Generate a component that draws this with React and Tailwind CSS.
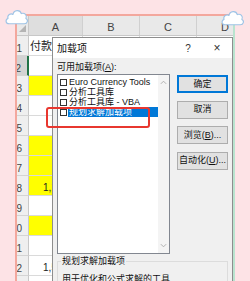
import React from 'react';

const FONT = { fontFamily: '"Liberation Sans","Noto Sans CJK SC",sans-serif' };

const COLS = [
  { key: 'A', w: 'w-[54px]' },
  { key: 'B', w: 'w-[57px]' },
  { key: 'C', w: 'w-[57px]' },
  { key: 'D', w: 'w-[57px]' },
];

// row number -> contents of column A
const ROWS = [
  { n: 1, text: '付款金额', align: 'left' },
  { n: 2, selected: true },
  { n: 3, yellow: true },
  { n: 4 },
  { n: 5 },
  { n: 6, yellow: true },
  { n: 7, yellow: true },
  { n: 8, yellow: true, text: '1,200.00', align: 'right' },
  { n: 9 },
  { n: 10, yellow: true },
  { n: 11 },
  { n: 12, text: '1,500.00', align: 'right' },
  { n: 13 },
];

const ADDINS = [
  { label: 'Euro Currency Tools' },
  { label: '分析工具库' },
  { label: '分析工具库 - VBA' },
  { label: '规划求解加载项', active: true },
];

function Cloud({ className }) {
  return (
    <svg viewBox="0 0 24 18" className={className}>
      <path
        d="M5 16 C1.5 16 1 12 3.8 11 C2.8 7.5 6.5 5.5 8.6 7 C9.4 2.5 15.5 2 16.6 6.2 C19.8 5 22.6 8 21 11 C23.6 12.3 22.6 16 19.5 16 Z"
        fill="#ffffff"
        stroke="#9fc4e6"
        strokeWidth="1.1"
        strokeLinejoin="round"
      />
    </svg>
  );
}

function Sheet() {
  return (
    <div className="flex flex-col">
      {/* column letters */}
      <div className="flex h-[20px] bg-[#e9e9e9] border-b border-[#c8c8c8]">
        <div className="w-[12px] shrink-0 relative border-r border-[#c8c8c8]">
          <div className="absolute right-[2px] bottom-[3px] w-0 h-0 border-l-[7px] border-l-transparent border-b-[7px] border-b-[#b4b4b4]" />
        </div>
        {COLS.map(c => (
          <div
            key={c.key}
            className={`${c.w} shrink-0 flex items-end justify-center pb-[2px] text-[11px] leading-none text-[#444] border-r border-[#d0d0d0] ${c.key === 'A' ? 'bg-[#dedede]' : ''}`}
          >
            {c.key}
          </div>
        ))}
      </div>

      {ROWS.map(r => (
        <div key={r.n} className="flex h-[20px]">
          <div
            className={`w-[12px] shrink-0 flex items-end justify-end pr-[6px] pb-[1px] text-[10px] leading-none text-[#444] border-b border-[#d4d4d4] ${
              r.selected ? 'bg-[#d3d3d3] border-r-2 border-r-[#217346]' : 'bg-[#efefef] border-r border-r-[#c8c8c8]'
            }`}
          >
            {r.n}
          </div>
          <div
            className={`w-[54px] shrink-0 flex items-end pb-[2px] text-[10px] leading-none text-[#222] whitespace-nowrap overflow-hidden border-r border-b border-[#dadada] ${
              r.yellow ? 'bg-[#ffff00]' : 'bg-white'
            } ${r.align === 'right' ? 'justify-end' : 'justify-start pl-[1px]'} ${r.n === 1 ? 'text-[11px] pb-[3px]' : ''}`}
          >
            {r.text}
          </div>
          <div className="w-[57px] shrink-0 bg-white border-r border-b border-[#dadada]" />
          <div className="w-[57px] shrink-0 bg-white border-r border-b border-[#dadada]" />
          <div className="w-[57px] shrink-0 bg-white border-r border-b border-[#dadada]" />
        </div>
      ))}
    </div>
  );
}

function Chevron({ up }) {
  return (
    <svg viewBox="0 0 8 5" className="w-[7px] h-[5px]">
      <path d={up ? 'M1 4 L4 1 L7 4' : 'M1 1 L4 4 L7 1'} fill="none" stroke="#a8a8a8" strokeWidth="1" />
    </svg>
  );
}

function Button({ children, primary }) {
  return (
    <div
      className={`h-[18px] w-[51px] flex items-center justify-center bg-[#e1e1e1] text-[9px] leading-none text-[#111] ${
        primary ? 'border-2 border-[#0078d7]' : 'border border-[#adadad]'
      }`}
    >
      {children}
    </div>
  );
}

function AddinsDialog() {
  return (
    <div className="absolute left-[52px] top-[37px] w-[181px] h-[260px] border border-[#8e8e8e] bg-[#f0f0f0] flex flex-col">
      {/* title bar */}
      <div className="h-[21px] bg-white flex items-center pl-[4px] pr-[5px] text-[10px] text-[#111]">
        <span>加载项</span>
        <div className="ml-auto flex items-center gap-[9px] text-[#333]">
          <span className="w-[20px] text-center text-[10px]">?</span>
          <span className="w-[20px] text-center text-[12px] leading-none">×</span>
        </div>
      </div>

      <div className="flex flex-col pl-[4px]">
        <div className="pt-[4px] text-[9px] leading-[11px] text-[#111]">
          可用加载项(<span className="underline">A</span>):
        </div>

        <div className="flex gap-[7px] mt-[1px]">
          {/* list box */}
          <div className="w-[113px] h-[180px] bg-white border border-[#828790] flex">
            <div className="flex-1 flex flex-col pt-[2px]">
              {ADDINS.map(a => (
                <div key={a.label} className="h-[10px] flex items-center text-[9px] leading-none whitespace-nowrap">
                  <span className="ml-[2px] w-[7px] h-[7px] shrink-0 border border-[#333] bg-white" />
                  <span
                    className={`ml-[1px] flex-1 h-full flex items-center px-[1px] ${
                      a.active ? 'bg-[#0078d7] text-white' : 'text-[#111]'
                    }`}
                  >
                    {a.label}
                  </span>
                </div>
              ))}
            </div>
            <div className="w-[11px] bg-[#f4f4f4] flex flex-col items-center justify-between py-[5px]">
              <Chevron up />
              <Chevron />
            </div>
          </div>

          {/* buttons */}
          <div className="flex flex-col gap-[7.5px] mt-[1px]">
            <Button primary>确定</Button>
            <Button>取消</Button>
            <Button>
              浏览(<span className="underline">B</span>)...
            </Button>
            <Button>
              自动化(<span className="underline">U</span>)...
            </Button>
          </div>
        </div>

        {/* description group */}
        <fieldset className="mt-[2px] w-[171px] h-[40px] border border-[#dcdcdc] px-[3px]">
          <legend className="px-[1px] text-[9px] leading-[11px] text-[#111]">规划求解加载项</legend>
          <div className="pl-[1px] pt-[7px] text-[9px] leading-[11px] text-[#111] whitespace-nowrap">
            用于优化和公式求解的工具
          </div>
        </fieldset>
      </div>
    </div>
  );
}

export default function App() {
  return (
    <div className="relative w-[250px] h-[281px] overflow-hidden bg-[#fde3e6]" style={FONT}>
      <div className="pt-[14px] pl-[15px]">
        <div className="w-[220px] h-[280px] overflow-hidden border-l-2 border-t-2 border-[#f3a79d] border-r-2 border-r-[#b9e4cf] bg-white">
          <Sheet />
        </div>
      </div>

      <AddinsDialog />

      {/* red highlight round the selected add-in */}
      <div className="absolute left-[46px] top-[107px] w-[104px] h-[21px] border-2 border-[#e8372f] rounded-[3px]" />

      <Cloud className="absolute left-[4px] top-[7px] w-[25px] h-[19px]" />
      <Cloud className="absolute left-[220px] top-[8px] w-[25px] h-[19px]" />
    </div>
  );
}
